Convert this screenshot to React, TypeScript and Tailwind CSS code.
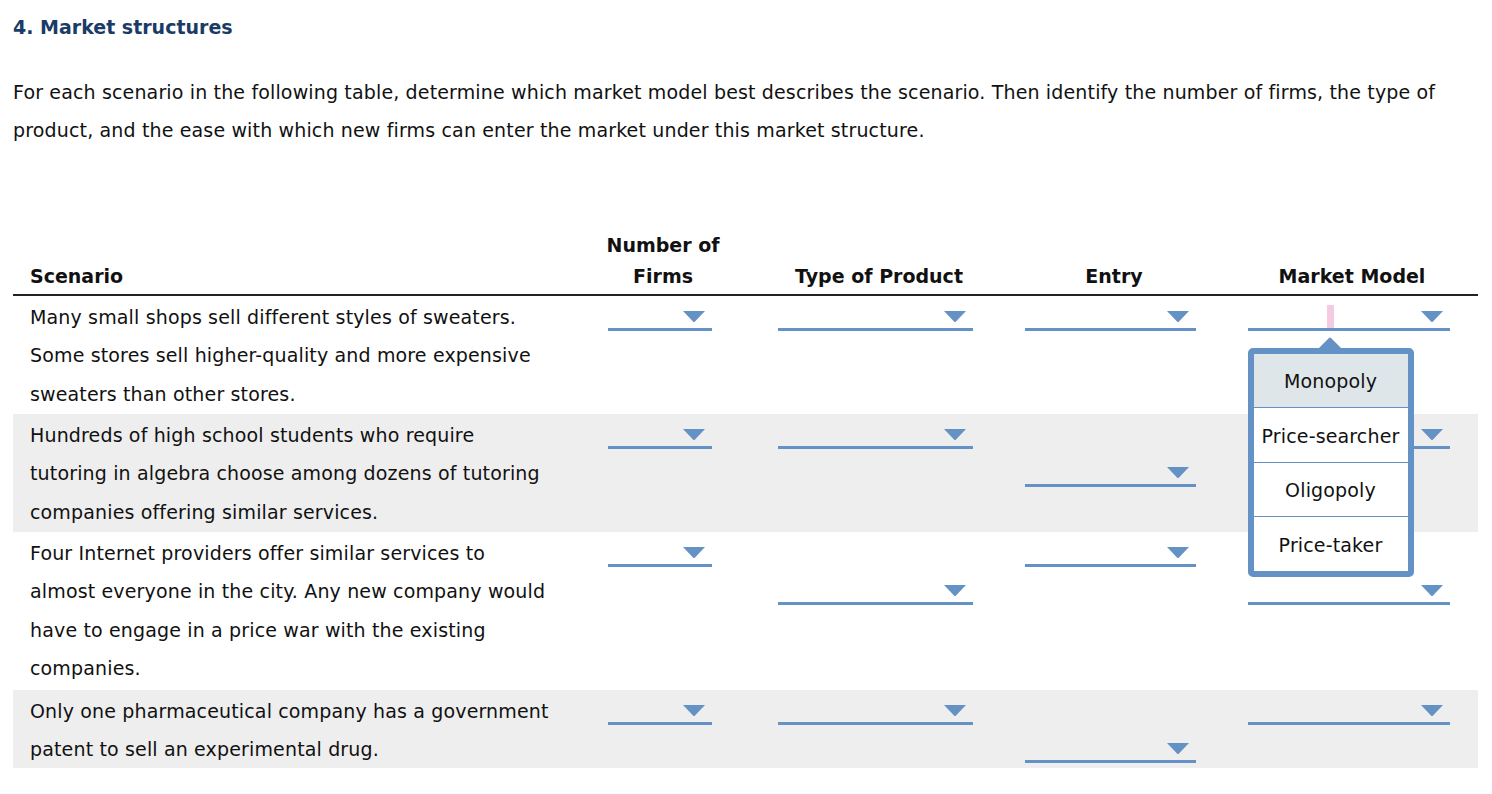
import React from "react";

const FONT = { fontFamily: 'Verdana, "DejaVu Sans", sans-serif' };

function Tri() {
  return (
    <svg width="22" height="11" viewBox="0 0 22 11" className="block">
      <path d="M0 0 H22 L12 10.5 Q11 11.5 10 10.5 Z" fill="#6592c4" />
    </svg>
  );
}

type DDProps = {
  w: string;
  line: number;
  open?: boolean;
};

function Dropdown({ w, line, open }: DDProps) {
  return (
    <div className={line === 1 ? "mt-[53px]" : "mt-[15px]"}>
      <div className={`relative flex flex-col ${w}`}>
        <div className="flex justify-end pr-[7px]">
          <Tri />
        </div>
        <div className="mt-[6px] h-[3px] bg-[#6592c4]" />
        {open && (
          <>
            <div className="absolute left-[79px] top-[-6px] h-[23px] w-[7px] bg-[#f4cbe0]" />
            <div className="absolute left-0 top-[37px] z-10 w-[166px] rounded-[5px] border-[6px] border-[#6592c4] bg-white text-center text-[19px] text-[#111]">
              <svg
                width="22"
                height="11"
                viewBox="0 0 22 11"
                className="absolute left-[65px] top-[-17px] block"
              >
                <path d="M0 11 L10 1 Q11 0 12 1 L22 11 Z" fill="#6592c4" />
              </svg>
              <div className="flex h-[54px] items-center justify-center border-b border-[#6592c4] bg-[#dfe6e9] pt-[2px]">
                Monopoly
              </div>
              <div className="flex h-[55px] items-center justify-center border-b border-[#6592c4] pt-[2px]">
                Price-searcher
              </div>
              <div className="flex h-[54px] items-center justify-center border-b border-[#6592c4] pt-[2px]">
                Oligopoly
              </div>
              <div className="flex h-[54px] items-center justify-center pt-[2px]">
                Price-taker
              </div>
            </div>
          </>
        )}
      </div>
    </div>
  );
}

type Row = {
  h: string;
  bg: string;
  lines: string[];
  firms: number;
  type: number;
  entry: number;
  market: number;
  open?: boolean;
};

const rows: Row[] = [
  {
    h: "h-[118px]",
    bg: "bg-white",
    lines: [
      "Many small shops sell different styles of sweaters.",
      "Some stores sell higher-quality and more expensive",
      "sweaters than other stores.",
    ],
    firms: 0,
    type: 0,
    entry: 0,
    market: 0,
    open: true,
  },
  {
    h: "h-[118px]",
    bg: "bg-[#eeeeee]",
    lines: [
      "Hundreds of high school students who require",
      "tutoring in algebra choose among dozens of tutoring",
      "companies offering similar services.",
    ],
    firms: 0,
    type: 0,
    entry: 1,
    market: 0,
  },
  {
    h: "h-[158px]",
    bg: "bg-white",
    lines: [
      "Four Internet providers offer similar services to",
      "almost everyone in the city. Any new company would",
      "have to engage in a price war with the existing",
      "companies.",
    ],
    firms: 0,
    type: 1,
    entry: 0,
    market: 1,
  },
  {
    h: "h-[78px]",
    bg: "bg-[#eeeeee]",
    lines: [
      "Only one pharmaceutical company has a government",
      "patent to sell an experimental drug.",
    ],
    firms: 0,
    type: 0,
    entry: 1,
    market: 0,
  },
];

const COLS = "grid grid-cols-[542px_216px_216px_254px_222px]";

export default function App() {
  return (
    <div
      className="min-h-[794px] bg-white px-[12px] pt-[15px] text-[19px] tracking-[0.15px] text-[#111]"
      style={FONT}
    >
      <div className="ml-[1px] whitespace-nowrap text-[19px] font-bold leading-[24px] tracking-normal text-[#1a3b66]">
        4. Market structures
      </div>
      <p className="ml-[1px] mt-[34px] whitespace-nowrap leading-[38.4px]">
        For each scenario in the following table, determine which market model best describes the scenario. Then identify the number of firms, the type of
        <br />
        product, and the ease with which new firms can enter the market under this market structure.
      </p>

      <div className="mt-[80px] ml-[1px] w-[1465px]">
        <div
          className={`${COLS} border-b-2 border-[#222] pb-[2px] font-bold leading-[31px] tracking-normal`}
        >
          <div className="flex items-end pl-[17px]">Scenario</div>
          <div className="flex flex-col items-center justify-end text-center">
            <span>Number of</span>
            <span>Firms</span>
          </div>
          <div className="flex items-end justify-center">Type of Product</div>
          <div className="flex items-end justify-center">Entry</div>
          <div className="flex items-end justify-center">Market Model</div>
        </div>

        {rows.map((r, i) => (
          <div key={i} className={`${COLS} ${r.h} ${r.bg} w-[1465px]`}>
            <div className="mt-[2px] whitespace-nowrap pl-[17px] leading-[38.4px]">
              {r.lines.map((l, j) => (
                <div key={j}>{l}</div>
              ))}
            </div>
            <div className="flex justify-center pr-[7px]">
              <Dropdown w="w-[104px]" line={r.firms} />
            </div>
            <div className="flex justify-center pr-[7px]">
              <Dropdown w="w-[195px]" line={r.type} />
            </div>
            <div className="flex justify-center pr-[7px]">
              <Dropdown w="w-[171px]" line={r.entry} />
            </div>
            <div className="flex justify-center pr-[7px]">
              <Dropdown w="w-[202px]" line={r.market} open={r.open} />
            </div>
          </div>
        ))}
      </div>
    </div>
  );
}
